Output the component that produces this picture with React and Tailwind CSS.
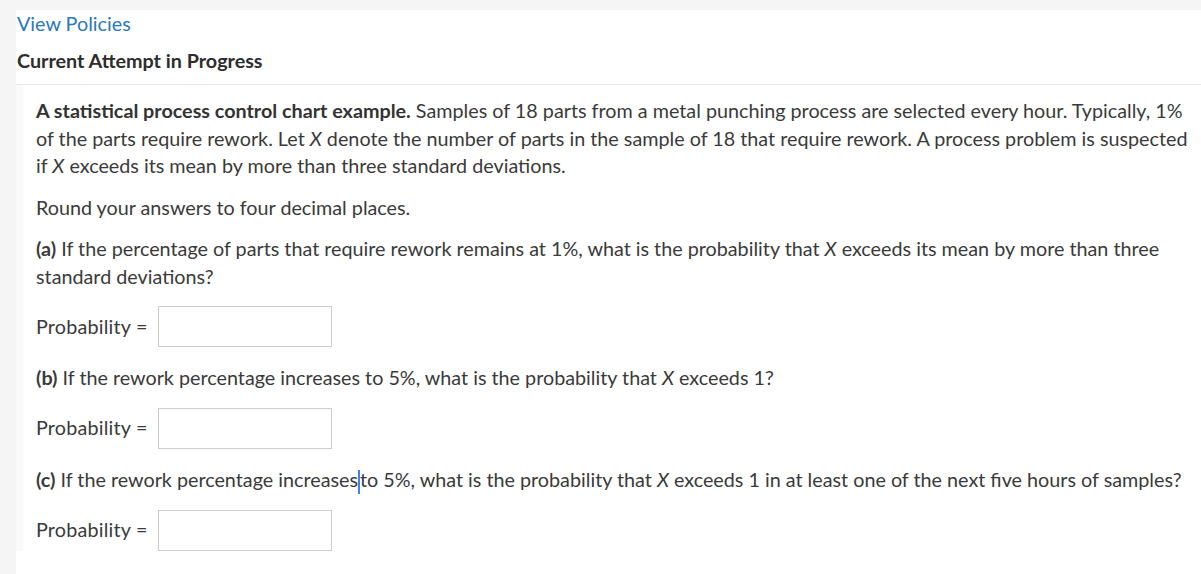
import React from 'react';

const X = () => <i className="italic">X</i>;

const AnswerRow = () => (
  <div className="flex items-center">
    <span className="mr-[10px] tracking-[0.2px]">Probability =</span>
    <div className="h-[41px] w-[174px] border border-[#cccccc] bg-white" />
  </div>
);

const App = () => {
  return (
    <div
      className="min-h-screen bg-[#f5f5f5] pl-4 pt-[10px] text-[19.75px] leading-[27px] text-[#3a3a3a]"
      style={{ fontFamily: 'Lato, "Open Sans", sans-serif' }}
    >
      <div className="bg-white pb-[30px]">
        <div className="pl-px pb-[10px]">
          <a href="#" className="block text-[#2a79b9]">
            View Policies
          </a>
          <h2 className="mt-[10px] font-bold text-[#2d2d2d]">Current Attempt in Progress</h2>
        </div>

        <div className="border-t border-[#e8e8e8] bg-[#fafafa] pl-[7px]">
          <div className="bg-white pl-[13px] pr-[8px] pt-[12px] leading-[27.5px]">
            <p>
              <b className="font-bold text-[#333333]">A statistical process control chart example.</b> Samples
              of 18 parts from a metal punching process are selected every hour. Typically, 1% of the parts
              require rework. Let <X /> denote the number of parts in the sample of 18 that require rework. A
              process problem is suspected if <X /> exceeds its mean by more than three standard deviations.
            </p>

            <p className="mt-[14px]">Round your answers to four decimal places.</p>

            <p className="mt-[14px]">
              <b className="font-bold">(a)</b> If the percentage of parts that require rework remains at 1%,
              what is the probability that <X /> exceeds its mean by more than three standard deviations?
            </p>
            <div className="mt-[16px]">
              <AnswerRow />
            </div>

            <p className="mt-[17px]">
              <b className="font-bold">(b)</b> If the rework percentage increases to 5%, what is the
              probability that <X /> exceeds 1?
            </p>
            <div className="mt-[16px]">
              <AnswerRow />
            </div>

            <p className="mt-[17px]">
              <b className="font-bold">(c)</b> If the rework percentage increases
              <span className="inline-block h-[24px] w-[2px] bg-[#3b82f6] align-middle" />
              to 5%, what is the probability that <X /> exceeds 1 in at least one of the next five hours of
              samples?
            </p>
            <div className="mt-[16px]">
              <AnswerRow />
            </div>
          </div>
        </div>
      </div>
    </div>
  );
};

export default App;
